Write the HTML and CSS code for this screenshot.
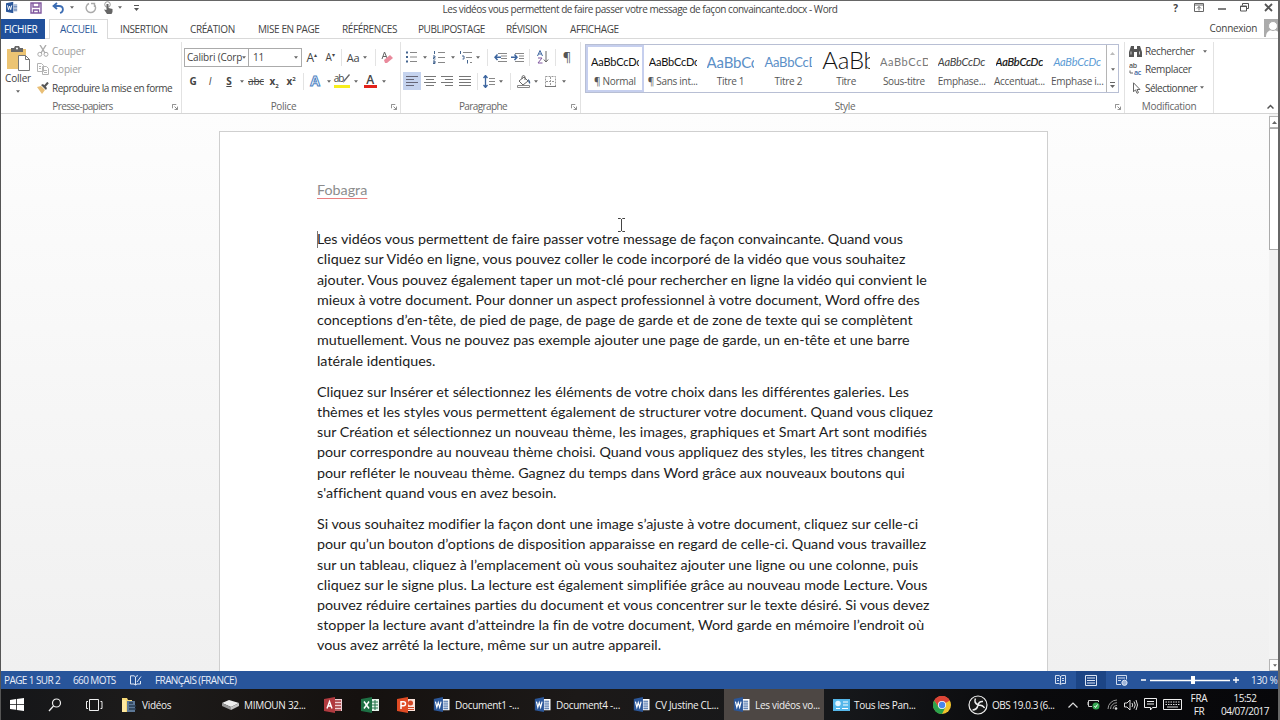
FILE: index.html
```
<!DOCTYPE html>
<html lang="fr">
  <head>
    <meta charset="utf-8" />
    <title>Les vidéos vous permettent de faire passer votre message de façon convaincante.docx - Word</title>
    <link rel="stylesheet" href="styles.css">
  </head>
  <body>
    <!-- shared icons -->
    <svg class="defs">
      <symbol id="word" viewBox="0 0 18 16">
        <path d="M9 2h8v12H9z" fill="#fff" />
        <path d="M10.500 4.500h5M10.500 6.500h5M10.500 8.500h5M10.500 10.500h5M10.500 12.500h5" stroke="#2b579a" />
        <path d="M0 2l10-2v16L0 14z" fill="#2b579a" />
        <path d="M2 5l1.500 6L5 6l1.500 5L8 5" fill="none" stroke="#fff" stroke-width="1.300" />
      </symbol>
      <symbol id="caret" viewBox="0 0 5 3"><path d="M0 0h5L2.500 3z" fill="#666" /></symbol>
      <symbol id="launch" viewBox="0 0 7 7"><path d="M.5 5V.5H5M3 3l3 3M6.500 3v3.500H3" fill="none" stroke="#777" /></symbol>
    </svg>

    <div class="screen">
      <header class="titlebar">
        <div class="quick">
          <svg width="13" height="13" viewBox="0 0 18 16"><use href="#word" /></svg>
          <svg width="12" height="12" viewBox="0 0 12 12"><path d="M1 1h10v10H1zM3 1v4h6V1M3.500 11V8h5v3" fill="none" stroke="#80589f" stroke-width="1.400" /></svg>
          <svg width="12" height="12" viewBox="0 0 12 12"><path d="M5 1L1.500 4 5 7M2 4h5c5 0 5 6 1 7" fill="none" stroke="#3b6cb3" stroke-width="1.800" /></svg>
          <svg class="caret"><use href="#caret" /></svg>
          <svg width="12" height="12" viewBox="0 0 12 12"><path d="M4 1.500a4.700 4.700 0 1 0 5 .8M9.500 5V1.500H6" fill="none" stroke="#aaa" stroke-width="1.400" /></svg>
          <svg width="11" height="13" viewBox="0 0 11 13"><circle cx="4.500" cy="3.500" r="2.800" fill="none" stroke="#999" /><path d="M3.500 3h2v4l4 1v3l-1 2H4L1 8.500l2.500.5z" fill="#666" /></svg>
          <svg class="caret"><use href="#caret" /></svg>
          <svg width="5" height="6" viewBox="0 0 5 6"><path d="M0 .5h5" stroke="#555" /><path d="M0 3h5L2.500 6z" fill="#555" /></svg>
        </div>
        <div class="doc-title">Les vidéos vous permettent de faire passer votre message de façon convaincante.docx - Word</div>
        <div class="window-buttons">
          <b>?</b>
          <svg width="10" height="9" viewBox="0 0 10 9"><path d="M.5.5h9v8h-9zM.5 2h9M5 7.500V3.500M3 5.500l2-2 2 2" fill="none" stroke="#666" /></svg>
          <svg width="8" height="9" viewBox="0 0 8 9"><path d="M0 6h8" stroke="#555" stroke-width="1.500" /></svg>
          <svg width="9" height="9" viewBox="0 0 9 9"><path d="M2.500 2.500v-2h6v5h-2M.5 3h6v5h-6zM.5 3.500h6" fill="none" stroke="#555" /></svg>
          <svg width="9" height="9" viewBox="0 0 9 9"><path d="M1 1l7 7M8 1L1 8" stroke="#555" stroke-width="1.800" /></svg>
        </div>
      </header>

      <nav class="tabs">
        <span class="tab file">FICHIER</span>
        <span class="tab active">ACCUEIL</span>
        <span class="tab">INSERTION</span>
        <span class="tab">CRÉATION</span>
        <span class="tab">MISE EN PAGE</span>
        <span class="tab">RÉFÉRENCES</span>
        <span class="tab">PUBLIPOSTAGE</span>
        <span class="tab">RÉVISION</span>
        <span class="tab">AFFICHAGE</span>
        <span class="signin">Connexion</span>
        <svg class="avatar" width="16" height="18" viewBox="0 0 16 18"><path d="M0 0h16v18H0z" fill="#ababab" /><path d="M2 18c0-5 3-7 7-7s7 2 7 7z" fill="#fff" /><circle cx="9" cy="7" r="4.500" fill="#fff" stroke="#ababab" /></svg>
      </nav>

      <section class="ribbon">
        <div class="group clipboard">
          <div class="tools">
            <div class="paste">
              <svg width="23" height="25" viewBox="0 0 23 25"><path d="M0 3h19v20H0z" fill="#ecc473" /><path d="M4 2h3l1-2h4l1 2h3v4H4z" fill="#666" /><circle cx="10" cy="2.500" r="1" fill="#fff" /><path d="M11.500 9.500h7l4 4v11h-11z" fill="#fff" stroke="#777" /><path d="M18.500 9.500v4h4" fill="none" stroke="#777" /></svg>
              <span>Coller</span>
              <svg class="caret"><use href="#caret" /></svg>
            </div>
            <div class="list">
              <div class="off"><svg width="12" height="12" viewBox="0 0 12 12"><path d="M3 0l5 8M9 0L4 8" stroke="#aaa" stroke-width="1.400" /><circle cx="2.800" cy="9.300" r="2" fill="none" stroke="#aaa" /><circle cx="9" cy="9.300" r="2" fill="none" stroke="#aaa" /></svg>Couper</div>
              <div class="off"><svg width="12" height="12" viewBox="0 0 12 12"><path d="M.5.5h4l2 2v6h-6zM5.500 3.500h4l2 2v6h-6zM2 3.500h2M2 5.500h2M7 7.500h3M7 9.500h3" fill="none" stroke="#b3b3b3" /></svg>Copier</div>
              <div class="painter"><svg width="12" height="12" viewBox="0 0 12 12"><path d="M0 5l4-1 4 4-3 4z" fill="#e9bf76" /><path d="M4 3l2-1 4 4-1 2z" fill="#555" /><path d="M7.500 4.500l3.500-4" stroke="#555" stroke-width="2" /></svg>Reproduire la mise en forme</div>
            </div>
          </div>
          <div class="caption">Presse-papiers<svg class="launch"><use href="#launch" /></svg></div>
        </div>

        <div class="group font">
          <div class="tools">
            <div class="font-row one">
              <div class="combo">Calibri (Corp<svg class="caret"><use href="#caret" /></svg></div>
              <div class="combo">11<svg class="caret"><use href="#caret" /></svg></div>
              <span class="grow">A<sup>▴</sup></span>
              <span class="shrink">A<sup>▾</sup></span>
              <i class="sep"></i>
              <span class="case">Aa</span>
              <svg class="caret"><use href="#caret" /></svg>
              <i class="sep"></i>
              <svg width="12" height="13" viewBox="0 0 12 13"><path d="M1 8l2.500-7L6 7M2 5.500h3" fill="none" stroke="#666" /><path d="M3 9l6-5 3 3-6 5H4z" fill="#e98a9c" /></svg>
            </div>
            <div class="font-row two">
              <b>G</b>
              <em>I</em>
              <b><u>S</u></b>
              <svg class="caret"><use href="#caret" /></svg>
              <s>abc</s>
              <b>x<sub>2</sub></b>
              <b>x<sup>2</sup></b>
              <i class="sep"></i>
              <span class="effect">A</span>
              <svg class="caret"><use href="#caret" /></svg>
              <span class="highlight">ab<svg width="7" height="9" viewBox="0 0 7 9"><path d="M0 9l1-3 5-6 1 1-5 6z" fill="#666" /></svg></span>
              <svg class="caret"><use href="#caret" /></svg>
              <span class="color">A</span>
              <svg class="caret"><use href="#caret" /></svg>
            </div>
          </div>
          <div class="caption">Police<svg class="launch"><use href="#launch" /></svg></div>
        </div>

        <div class="group paragraph">
          <div class="tools">
            <div class="par-row one">
              <svg width="11" height="12" viewBox="0 0 11 12"><path d="M0 1.500h2M0 6h2M0 10.500h2" stroke="#44658f" stroke-width="2" /><path d="M4 1.500h7M4 6h7M4 10.500h7" stroke="#888" /></svg>
              <svg class="caret"><use href="#caret" /></svg>
              <svg width="12" height="13" viewBox="0 0 12 13"><path d="M1.500 0v3M0 5h2v1.500H.5V8H2.500M0 10h2v2.500H0M0 11.200h2" fill="none" stroke="#44658f" /><path d="M5 1.500h7M5 6.500h7M5 11.500h7" stroke="#888" /></svg>
              <svg class="caret"><use href="#caret" /></svg>
              <svg width="14" height="13" viewBox="0 0 14 13"><path d="M1.500 0v3M3 5h2v3H3.500M8.500 9v3.500" fill="none" stroke="#44658f" /><path d="M4 1.500h9M7 6.500h6M11 11.500h2" stroke="#888" /></svg>
              <svg class="caret"><use href="#caret" /></svg>
              <i class="sep"></i>
              <svg width="13" height="11" viewBox="0 0 13 11"><path d="M4 1.500h9M7 4h6M7 6.500h6M4 9.500h9" stroke="#888" /><path d="M1 5.300h6M3.500 2.500L1 5.300l2.500 2.800" fill="none" stroke="#3c659f" stroke-width="1.500" /></svg>
              <svg width="13" height="11" viewBox="0 0 13 11"><path d="M4 1.500h9M8 4h5M8 6.500h5M4 9.500h9" stroke="#888" /><path d="M0 5.300h6M3.500 2.500L6 5.300 3.500 8.100" fill="none" stroke="#3c659f" stroke-width="1.500" /></svg>
              <i class="sep"></i>
              <svg width="12" height="14" viewBox="0 0 12 14"><path d="M.5 6L3 .5 5.500 6M1.500 4h3" fill="none" stroke="#3c659f" /><path d="M1 8h4L1 13h4.500" fill="none" stroke="#80589f" /><path d="M9 1v11M6.800 9.500L9 12l2.200-2.500" fill="none" stroke="#666" /></svg>
              <i class="sep"></i>
              <span class="pilcrow">¶</span>
            </div>
            <div class="par-row two">
              <span class="on"><svg width="12" height="10" viewBox="0 0 12 10"><path d="M0 .5h12M0 3.500h8M0 6.500h12M0 9.500h8" stroke="#667" /></svg></span>
              <svg width="12" height="10" viewBox="0 0 12 10"><path d="M0 .5h12M2 3.500h8M0 6.500h12M2 9.500h8" stroke="#777" /></svg>
              <svg width="12" height="10" viewBox="0 0 12 10"><path d="M0 .5h12M4 3.500h8M0 6.500h12M4 9.500h8" stroke="#777" /></svg>
              <svg width="12" height="10" viewBox="0 0 12 10"><path d="M0 .5h12M0 3.500h12M0 6.500h12M0 9.500h12" stroke="#777" /></svg>
              <i class="sep"></i>
              <svg width="12" height="13" viewBox="0 0 12 13"><path d="M2.500 1v11M.5 3l2-2.500 2 2.500M.5 10l2 2.500 2-2.500" fill="none" stroke="#3c659f" stroke-width="1.300" /><path d="M6 3.500h6M6 6.500h6M6 9.500h6" stroke="#888" /></svg>
              <svg class="caret"><use href="#caret" /></svg>
              <i class="sep"></i>
              <svg width="14" height="13" viewBox="0 0 14 13"><path d="M2 6l5-4 4 4-5 4zM5 4V1.500q1.500-2 3 0V5" fill="#fff" stroke="#666" /><path d="M11 4q3 2 2 5-2-1-2-5z" fill="#44658f" /><path d="M.5 10.500h12v2H.5z" fill="#fff" stroke="#888" /></svg>
              <svg class="caret"><use href="#caret" /></svg>
              <svg width="11" height="11" viewBox="0 0 11 11"><path d="M.5.5h10v10H.5zM5.500 1v9M1 5.500h9" fill="none" stroke="#999" stroke-dasharray="2 1" /><path d="M0 10.500h11" stroke="#777" /></svg>
              <svg class="caret"><use href="#caret" /></svg>
            </div>
          </div>
          <div class="caption">Paragraphe<svg class="launch"><use href="#launch" /></svg></div>
        </div>

        <div class="group styles">
          <div class="gallery">
            <div class="style selected"><p>AaBbCcDc</p><span>¶ Normal</span></div>
            <div class="style"><p>AaBbCcDc</p><span>¶ Sans int...</span></div>
            <div class="style"><p class="title1">AaBbCc</p><span>Titre 1</span></div>
            <div class="style"><p class="title2">AaBbCcD</p><span>Titre 2</span></div>
            <div class="style"><p class="title">AaBb</p><span>Titre</span></div>
            <div class="style"><p class="subtitle">AaBbCcD</p><span>Sous-titre</span></div>
            <div class="style"><p class="emphasis">AaBbCcDc</p><span>Emphase...</span></div>
            <div class="style"><p class="strong">AaBbCcDc</p><span>Accentuat...</span></div>
            <div class="style"><p class="intense">AaBbCcDc</p><span>Emphase i...</span></div>
            <div class="gallery-nav">
              <svg width="5" height="3" viewBox="0 0 5 3"><path d="M0 3h5L2.500 0z" fill="#bbb" /></svg>
              <svg class="caret"><use href="#caret" /></svg>
              <svg width="5" height="6" viewBox="0 0 5 6"><path d="M0 .5h5" stroke="#666" /><path d="M0 3h5L2.500 6z" fill="#666" /></svg>
            </div>
          </div>
          <div class="caption">Style<svg class="launch"><use href="#launch" /></svg></div>
        </div>

        <div class="group editing">
          <div class="list">
            <div><svg width="13" height="11" viewBox="0 0 13 11"><path d="M0 11V6l2-6h3v3h3V0h3l2 6v5H8V6H5v5z" fill="#555" /><path d="M2 5.500v3M10.500 5.500v3" stroke="#ccc" /></svg>Rechercher<svg class="caret far"><use href="#caret" /></svg></div>
            <div><svg width="13" height="13" viewBox="0 0 13 13"><text x="0" y="5" class="ab">ab</text><text x="5" y="12" class="ac">ac</text><path d="M1 7.500V10h3" fill="none" stroke="#666" /></svg>Remplacer</div>
            <div class="select"><svg width="13" height="12" viewBox="0 0 13 12"><path d="M4.500.8v9l2-2 1.500 3.500 1.500-.7L8 7.500h3z" fill="#fff" stroke="#666" /></svg>Sélectionner<svg class="caret"><use href="#caret" /></svg></div>
          </div>
          <div class="caption">Modification</div>
        </div>
        <svg class="collapse" width="7" height="5" viewBox="0 0 7 5"><path d="M.5 4.500l3-3 3 3" fill="none" stroke="#555" stroke-width="1.500" /></svg>
      </section>

      <main class="workspace">
        <article class="page">
          <div class="page-header">Fobagra</div>
          <p class="first">Les vidéos vous permettent de faire passer votre message de façon convaincante. Quand vous<br>
            cliquez sur Vidéo en ligne, vous pouvez coller le code incorporé de la vidéo que vous souhaitez<br>
            ajouter. Vous pouvez également taper un mot-clé pour rechercher en ligne la vidéo qui convient le<br>
            mieux à votre document. Pour donner un aspect professionnel à votre document, Word offre des<br>
            conceptions d’en-tête, de pied de page, de page de garde et de zone de texte qui se complètent<br>
            mutuellement. Vous ne pouvez pas exemple ajouter une page de garde, un en-tête et une barre<br>
            latérale identiques.</p>
          <p>Cliquez sur Insérer et sélectionnez les éléments de votre choix dans les différentes galeries. Les<br>
            thèmes et les styles vous permettent également de structurer votre document. Quand vous cliquez<br>
            sur Création et sélectionnez un nouveau thème, les images, graphiques et Smart Art sont modifiés<br>
            pour correspondre au nouveau thème choisi. Quand vous appliquez des styles, les titres changent<br>
            pour refléter le nouveau thème. Gagnez du temps dans Word grâce aux nouveaux boutons qui<br>
            s'affichent quand vous en avez besoin.</p>
          <p>Si vous souhaitez modifier la façon dont une image s’ajuste à votre document, cliquez sur celle-ci<br>
            pour qu’un bouton d’options de disposition apparaisse en regard de celle-ci. Quand vous travaillez<br>
            sur un tableau, cliquez à l’emplacement où vous souhaitez ajouter une ligne ou une colonne, puis<br>
            cliquez sur le signe plus. La lecture est également simplifiée grâce au nouveau mode Lecture. Vous<br>
            pouvez réduire certaines parties du document et vous concentrer sur le texte désiré. Si vous devez<br>
            stopper la lecture avant d’atteindre la fin de votre document, Word garde en mémoire l’endroit où<br>
            vous avez arrêté la lecture, même sur un autre appareil.</p>
          <svg class="pointer" width="7" height="14" viewBox="0 0 7 14"><path d="M0 .5h2.500l1 1 1-1H7M3.500 1v12M0 13.500h2.500l1-1 1 1H7" fill="none" stroke="#444" /></svg>
        </article>
        <div class="scrollbar">
          <span class="arrow"><svg width="5" height="3" viewBox="0 0 5 3"><path d="M0 3h5L2.500 0z" fill="#666" /></svg></span>
          <span class="thumb"></span>
          <span class="arrow"><svg class="caret"><use href="#caret" /></svg></span>
        </div>
      </main>

      <footer class="status">
        <span class="pages">PAGE 1 SUR 2</span>
        <span class="words">660 MOTS</span>
        <svg class="proof" width="12" height="11" viewBox="0 0 12 11"><path d="M5.500 2L4 .8H.5V9H4l1.500 1L7 9h3.500V6M5.500 2v8M5.500 2L7 .8h1M7 7l4-5.500" fill="none" stroke="#dce6f5" /></svg>
        <span class="lang">FRANÇAIS (FRANCE)</span>
        <div class="views">
          <svg width="11" height="10" viewBox="0 0 11 10"><path d="M5.500 1.500L4 .5H.5v8H4l1.500 1 1.500-1h3.500v-8H7zM5.500 1v8M2 3.500h2M2 5.500h2M7 3.500h2M7 5.500h2" fill="none" stroke="#cfdcf0" /></svg>
          <span class="current"><svg width="12" height="11" viewBox="0 0 12 11"><path d="M.5.500h11v10H.5zM2 3h8M2 5.500h8M2 8h8" fill="none" stroke="#dce6f5" /></svg></span>
          <svg width="12" height="11" viewBox="0 0 12 11"><path d="M5 9.500H.5v-9h10v4M2 3h7M2 5.500h3" fill="none" stroke="#cfdcf0" /><circle cx="8.500" cy="7.800" r="2.600" fill="#9fb6da" stroke="#dce6f5" /></svg>
        </div>
        <svg class="zoom" width="98" height="12" viewBox="0 0 98 12"><path d="M0 6h5M9 6.500h80M92 6h6M95 3v6" stroke="#fff" stroke-width="1.300" /><path d="M50 2h4v8h-4z" fill="#fff" /></svg>
        <span class="percent">130 %</span>
      </footer>

      <div class="taskbar">
        <svg width="14" height="13" viewBox="0 0 14 13"><path d="M0 2l6-1v5H0zM6.800.9L14 0v6H6.800zM0 6.800h6v5L0 11zM6.800 6.800H14V13l-7.200-1z" fill="#fff" /></svg>
        <svg width="14" height="14" viewBox="0 0 14 14"><circle cx="8.500" cy="5" r="4" fill="none" stroke="#eee" stroke-width="1.200" /><path d="M5.500 8L1 13" stroke="#eee" stroke-width="1.300" /></svg>
        <svg width="17" height="12" viewBox="0 0 17 12"><path d="M3.500.5h9v11h-9zM2 2.500H.5v7H2M14.500 2.500H16v7h-1.500" fill="none" stroke="#eee" /></svg>
        <span class="task"><svg width="16" height="16" viewBox="0 0 16 16"><path d="M0 1h5l1 2h4v12H0z" fill="#f6d978" /><path d="M5 4h8v11H5z" fill="#5d7897" /><path d="M7 6h4M7 9h7M7 12h7" stroke="#293c52" stroke-width="1.500" /><path d="M0 3h4v12H0z" fill="#ffe89f" /></svg>Vidéos</span>
        <span class="task drive"><svg width="17" height="11" viewBox="0 0 17 11"><path d="M0 4l7-3 10 3-8 4z" fill="#eee" /><path d="M0 4l9 4v3L0 7z" fill="#999" /><path d="M9 8l8-4v3l-8 4z" fill="#c5c5c5" /></svg>MIMOUN 32...</span>
        <svg width="18" height="16" viewBox="0 0 18 16"><path d="M9 2h9v12H9z" fill="#f0d0d4" /><path d="M11 4h6M11 7h6M11 10h6M11 13h6" stroke="#a4373a" stroke-width="1.300" /><path d="M0 2l11-2v16L0 14z" fill="#b13a3f" /><path d="M3 11.500L5.500 4.500 8 11.500M4 9h3" fill="none" stroke="#fff" stroke-width="1.400" /></svg>
        <svg width="18" height="16" viewBox="0 0 18 16"><path d="M9 2h9v12H9z" fill="#e5f3ea" /><path d="M10 5h7M10 8h7M10 11h7M14 3v10" stroke="#217346" /><path d="M0 2l11-2v16L0 14z" fill="#1e7145" /><path d="M3 4.500l5 7M8 4.500l-5 7" stroke="#fff" stroke-width="1.500" /></svg>
        <svg width="18" height="16" viewBox="0 0 18 16"><path d="M9 2h9v12H9z" fill="#fbe3da" /><circle cx="13.500" cy="6" r="2.500" fill="#d24726" /><path d="M11 10.500h6M11 12.500h6" stroke="#d24726" /><path d="M0 2l11-2v16L0 14z" fill="#e04b24" /><path d="M4 12V4.700h2.500q2 0 2 2t-2 2H4" fill="none" stroke="#fff" stroke-width="1.500" /></svg>
        <span class="task"><svg width="18" height="15" viewBox="0 0 18 16"><use href="#word" /></svg>Document1 -...</span>
        <span class="task"><svg width="18" height="15" viewBox="0 0 18 16"><use href="#word" /></svg>Document4 -...</span>
        <span class="task"><svg width="18" height="15" viewBox="0 0 18 16"><use href="#word" /></svg>CV Justine CL...</span>
        <span class="task front"><svg width="18" height="15" viewBox="0 0 18 16"><use href="#word" /></svg>Les vidéos vo...</span>
        <span class="task"><svg width="17" height="12" viewBox="0 0 17 12"><path d="M0 0h17v12H0z" fill="#55b7ea" /><circle cx="5" cy="4.500" r="2.700" fill="#e2f5ff" /><path d="M10 3h5M10 6h5M3 9.500h4M9 9.500h6" stroke="#fff" /></svg>Tous les Pan...</span>
        <svg width="18" height="18" viewBox="0 0 18 18"><circle cx="9" cy="9" r="9" fill="#f2c32d" /><path d="M9 9L1.200 4.500A9 9 0 0 1 16.800 4.500z" fill="#dc4437" /><path d="M9 5h7.900A9 9 0 0 0 1.200 4.500L5.500 11z" fill="#dc4437" /><path d="M1.200 4.500A9 9 0 0 0 9 18l3.500-7H5.500z" fill="#2ba24c" /><circle cx="9" cy="9" r="4" fill="#fff" /><circle cx="9" cy="9" r="3.200" fill="#4a87ee" /></svg>
        <span class="task obs"><svg width="20" height="20" viewBox="0 0 20 20"><circle cx="10" cy="10" r="9" fill="#171717" stroke="#eee" stroke-width="1.200" /><path d="M7.500 3.500q-2 4 2.500 6.500 5 0 6.500 3M10 10q-1 5-5.500 5M10 10q1-4 5-3.500" fill="none" stroke="#eee" stroke-width="1.500" /></svg>OBS 19.0.3 (6...</span>
        <svg width="10" height="6" viewBox="0 0 10 6"><path d="M.5 5.500L5 1l4.500 4.500" fill="none" stroke="#ddd" stroke-width="1.200" /></svg>
        <svg width="13" height="11" viewBox="0 0 13 11"><path d="M11.500 3V1.500H1.500v6H5M0 3v3" fill="none" stroke="#ccc" /><circle cx="9" cy="7" r="3.500" fill="#35a853" /><path d="M7.500 7l1 1.500 2-3" fill="none" stroke="#fff" /></svg>
        <svg width="11" height="11" viewBox="0 0 11 11"><path d="M1 10A9 9 0 0 1 10 1M3.500 10A6.500 6.500 0 0 1 10 3.700M6 10A4 4 0 0 1 10 6.300" fill="none" stroke="#999" /><circle cx="9" cy="9.500" r="1.300" fill="#ddd" /></svg>
        <svg width="14" height="12" viewBox="0 0 14 12"><path d="M.5 4H3l3-3v10L3 8H.5zM8 4q1.500 2 0 4M10 2.500q2.500 3.500 0 7M12 1q3 5 0 10" fill="none" stroke="#ddd" /></svg>
        <svg width="13" height="13" viewBox="0 0 13 13"><path d="M.5.500h12v9h-4l-2 2.500v-2.500h-6zM3 3.500h7M3 6h7" fill="none" stroke="#eee" /></svg>
        <svg width="19" height="11" viewBox="0 0 19 11"><path d="M.5.500h18v10H.5z" fill="none" stroke="#eee" /><path d="M2.500 3h14M2.500 5.500h14" stroke="#ddd" stroke-dasharray="1.500 1" /><path d="M4 8h11" stroke="#ddd" /></svg>
        <span class="stack"><span>FRA</span><span>FR</span></span>
        <span class="stack clock"><span>15:52</span><span>04/07/2017</span></span>
      </div>
      <div class="edge"></div>
    </div>
  </body>
</html>
```
FILE: styles.css
```
* {
  box-sizing: border-box;
}

body {
  margin: 0;
  overflow: hidden;
  font-family: "Open Sans", "Noto Sans", sans-serif;
  font-size: 10px;
  letter-spacing: -0.2px;
  color: #444;
}

svg {
  display: block;
  flex: none;
}

p {
  margin: 0;
}

.defs {
  display: none;
}

.screen {
  position: relative;
  display: flex;
  flex-direction: column;
  width: 1280px;
  height: 720px;
  background: #fff;
  white-space: nowrap;
}

.caret {
  width: 4px;
  height: 3px;
}

.sep {
  width: 1px;
  height: 17px;
  background: #e3e3e3;
}

/* title bar */

.titlebar {
  display: grid;
  grid-template-columns: 160px 1fr 160px;
  align-items: center;
  height: 19px;
  padding-bottom: 2px;
}

.quick {
  display: grid;
  grid-template-columns: 24px 23px 22px 5px 33px 2px 22px 10px;
  align-items: center;
  justify-items: center;
  padding-bottom: 2px;
}

.doc-title {
  text-align: center;
  letter-spacing: -0.46px;
}

.window-buttons {
  display: grid;
  grid-template-columns: repeat(4, 23px) 24px;
  align-items: center;
  justify-content: end;
  justify-items: center;
  padding: 0 0 2px;
}

/* tabs */

.tabs {
  display: grid;
  grid-template-columns: 49px 71px 70px 68px 84px 76px 88px 64px 60px 1fr auto;
  height: 20px;
  border-bottom: 1px solid #d9d9d9;
  letter-spacing: -0.4px;
}

.tab {
  height: 20px;
  line-height: 20px;
}

.file {
  width: 45px;
  padding-left: 4px;
  background: #20509b;
  color: #fff;
}

.active {
  width: 59px;
  border: 1px solid #d9d9d9;
  border-bottom: 0;
  background: #fff;
  line-height: 19px;
  text-align: center;
  color: #2b579a;
}

.signin {
  margin-right: 7px;
  line-height: 19px;
  letter-spacing: -0.3px;
  text-align: right;
}

/* ribbon */

.ribbon {
  display: flex;
  height: 75px;
  padding-top: 3px;
  border-bottom: 1px solid #d5d5d5;
}

.group {
  display: flex;
  flex-direction: column;
  height: 71px;
  border-right: 1px solid #e2e2e2;
}

.clipboard {
  width: 182px;
}

.font {
  width: 219px;
}

.paragraph {
  width: 180px;
}

.styles {
  width: 544px;
}

.editing {
  width: 89px;
}

.caption {
  position: relative;
  margin-top: auto;
  height: 13px;
  line-height: 13px;
  letter-spacing: -0.3px;
  text-align: center;
  color: #666;
}

.clipboard .caption {
  padding-right: 16px;
  letter-spacing: -0.6px;
}

.font .caption,
.paragraph .caption {
  padding-right: 15px;
}

.paragraph .caption {
  letter-spacing: -0.6px;
}

.styles .caption {
  padding-right: 15px;
}

.launch {
  position: absolute;
  right: 3px;
  top: 4px;
  width: 6px;
  height: 6px;
}

.clipboard .tools {
  display: flex;
}

.paste {
  display: flex;
  flex-direction: column;
  align-items: center;
  width: 36px;
  padding-top: 4px;
}

.paste span {
  margin: 0 0 5px;
  line-height: 14px;
}

.list > div {
  display: flex;
  align-items: center;
  gap: 3px;
  height: 18.3px;
}

.clipboard .list {
  padding-left: 1px;
}

.off {
  color: #a0a0a0;
}

.painter {
  letter-spacing: -0.48px;
}

.font-row,
.par-row {
  display: grid;
  align-items: center;
  justify-items: center;
  height: 26px;
  padding-left: 2px;
}

.font-row.one {
  grid-template-columns: 65px 53px 19px 18px 4px 20px 4px 16px 8px;
  padding-top: 4px;
}

.font-row.two {
  grid-template-columns: 18px 16px 22px 4px 24px 12px 22px 2px 22px 5px 22px 6px 22px 5px;
}

.combo {
  display: flex;
  justify-content: space-between;
  align-items: center;
  width: 100%;
  height: 19px;
  padding: 0 3px 0 2px;
  border: 1px solid #ababab;
  letter-spacing: -0.2px;
}

.combo + .combo {
  border-left: 0;
  padding-left: 4px;
}

.font-row sup,
.font-row sub {
  font-size: 6px;
  line-height: 0;
}

.grow {
  font-size: 12px;
}

.case {
  font-size: 11px;
}

.effect {
  font-size: 14px;
  font-weight: bold;
  line-height: 16px;
  color: #fff;
  -webkit-text-stroke: 1px #4d83c4;
}

.highlight {
  display: flex;
  height: 14px;
  border-bottom: 3px solid #f7ee1d;
  line-height: 9px;
  letter-spacing: -1px;
}

.color {
  width: 13px;
  height: 14px;
  border-bottom: 3px solid #e3231b;
  font-size: 12px;
  font-weight: 600;
  line-height: 11px;
  text-align: center;
}

.par-row.one {
  grid-template-columns: 17px 10px 18px 9px 18px 6px 12px 15px 19px 4px 23px 3px 20px;
  padding-top: 4px;
}

.par-row.two {
  grid-template-columns: 18px 18px 16px 20px 4px 20px 4px 14px 14px 10px 18px 10px;
}

.on {
  display: flex;
  align-items: center;
  justify-content: center;
  width: 18px;
  height: 18px;
  background: #c5d3ee;
}

.pilcrow {
  font-size: 13px;
  color: #555;
}

/* style gallery */

.gallery {
  display: flex;
  width: 534px;
  height: 49px;
  margin: 2px 0 0 4px;
  border: 1px solid #b8bfd4;
}

.style {
  width: 57.8px;
  height: 47px;
  padding: 4px 5px 0;
  overflow: hidden;
  text-align: center;
}

.style p {
  height: 26px;
  overflow: hidden;
  font-family: Lato, sans-serif;
  font-size: 11px;
  line-height: 26px;
  text-align: left;
  color: #111;
}

.style span {
  display: block;
  margin: 0 -4px;
  line-height: 13px;
  letter-spacing: -0.3px;
  color: #555;
}

.selected {
  padding: 2px 3px 0;
  border: 2px solid #c6cfee;
}

.style .title1 {
  font-size: 15px;
  color: #5b8fc7;
}

.style .title2 {
  font-size: 13px;
  color: #5b8fc7;
}

.style .title {
  font-size: 24px;
  font-weight: 300;
  line-height: 21px;
}

.style .subtitle {
  letter-spacing: 0.6px;
  color: #777;
}

.style .emphasis {
  font-style: italic;
  color: #444;
}

.style .strong {
  font-style: italic;
  -webkit-text-stroke: 0.2px #111;
}

.style .intense {
  font-style: italic;
  color: #5b9bd5;
}

.gallery-nav {
  display: grid;
  grid-template-rows: 17px 15px 15px;
  align-items: center;
  justify-items: center;
  flex: 1;
  border-left: 1px solid #b5b5b5;
}

.gallery-nav svg + svg {
  box-shadow: 0 -6px 0 -5px #b5b5b5;
}

.editing .list {
  padding-left: 4px;
}

.editing .list > div {
  letter-spacing: -0.35px;
}

.editing .list > .select {
  letter-spacing: -0.5px;
}

.caret.far {
  margin-left: 5px;
}

.ab,
.ac {
  font-size: 7px;
  font-weight: 600;
  fill: #555;
}

.ac {
  fill: #3c659f;
}

.collapse {
  margin: 62px 6px 0 auto;
}

/* document */

.workspace {
  display: flex;
  justify-content: space-between;
  height: 557px;
  padding-left: 219px;
  background: linear-gradient(#fdfdfd, #f0f0f0);
}

.page {
  position: relative;
  width: 829px;
  margin-top: 17px;
  padding: 48px 0 0 97px;
  border: 1px solid #cfcfcf;
  border-bottom: 0;
  background: #fff;
  font-family: Lato, sans-serif;
  font-size: 14.3px;
  font-variant-ligatures: none;
  line-height: 20.22px;
  letter-spacing: 0;
  color: #1c1c1c;
}

.page p {
  margin-bottom: 11px;
}

.page-header {
  width: 52px;
  margin-bottom: 29px;
  color: #8c8c8c;
  text-decoration: underline solid #ea7f7f 1px;
  text-decoration-skip-ink: none;
  text-underline-offset: 3px;
}

.first::before {
  content: "";
  position: absolute;
  left: 97px;
  top: 99px;
  width: 1px;
  height: 17px;
  background: #777;
}

.pointer {
  position: absolute;
  left: 398px;
  top: 86px;
}

.scrollbar {
  display: flex;
  flex-direction: column;
  width: 11px;
  padding-top: 2px;
  background: #f3f3f3;
}

.arrow {
  display: flex;
  align-items: center;
  justify-content: center;
  height: 12px;
  border: 1px solid #b5b5b5;
  background: #fff;
}

.thumb {
  height: 122px;
  margin: 0 0 auto;
  border: 1px solid #ababab;
  background: #fff;
}

/* status bar */

.status {
  display: flex;
  align-items: center;
  height: 18px;
  padding: 0 5px 0 4px;
  background: #28559b;
  letter-spacing: -0.6px;
  color: #e8eefa;
}

.pages {
  width: 69px;
}

.words {
  width: 57px;
}

.proof {
  margin-right: 13px;
}

.views {
  display: grid;
  grid-template-columns: 31px 30px 31px;
  align-items: center;
  justify-items: center;
  margin-left: auto;
}

.current {
  display: flex;
  align-items: center;
  justify-content: center;
  width: 30px;
  height: 18px;
  background: #1c4585;
}

.zoom {
  margin: 0 12px 0 4px;
}

.percent {
  width: 24px;
  letter-spacing: -0.3px;
}

/* taskbar */

.taskbar {
  display: grid;
  grid-template-columns: 34px 42px 37px 100px 101px 37px 37px 36px 101px 99px 100px 100px 100px 36px 101px 23px 18px 21px 16px 22px 22px 32px 60px;
  align-items: center;
  justify-items: center;
  height: 31px;
  background: linear-gradient(100deg, #151619, #1d1b1a 12%, #15110f 28%, #1c1918 45%, #16181b 65%, #0a0a0c 80%, #07070a);
  letter-spacing: -0.3px;
  color: #f0f0f0;
}

.task {
  display: flex;
  align-items: center;
  gap: 4px;
  width: 100%;
  height: 31px;
  padding-left: 9px;
}

.task.drive {
  gap: 5px;
}

.task.front {
  background: #4d4744;
}

.task.obs {
  padding-left: 8px;
  letter-spacing: -0.45px;
}

.stack {
  display: flex;
  flex-direction: column;
  align-items: center;
  line-height: 13px;
}

.clock {
  letter-spacing: -0.5px;
}

/* dark rim of the window */

.edge {
  position: absolute;
  inset: 0;
  border-top: 1px solid #666;
  border-left: 1px solid #555;
  border-right: 2px solid #666;
  pointer-events: none;
}
```
